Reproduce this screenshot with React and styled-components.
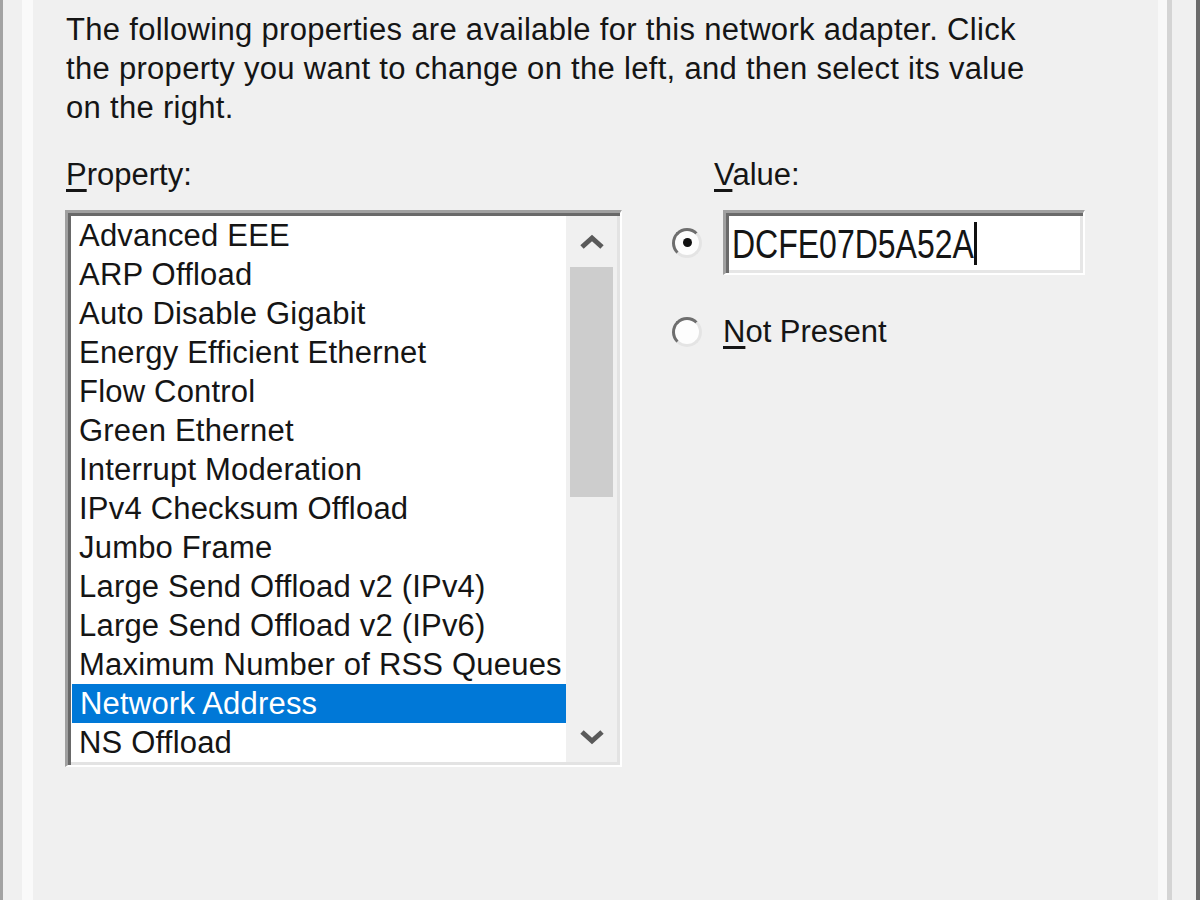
import React from 'react';
import styled, { createGlobalStyle } from 'styled-components';

const GlobalStyle = createGlobalStyle`
  html, body {
    margin: 0;
    padding: 0;
    background: #f0f0f0;
  }
  body {
    font-family: 'Liberation Sans', Arial, sans-serif;
    color: #151515;
  }
`;

const Window = styled.div`
  box-sizing: border-box;
  height: 900px;
  overflow: hidden;
  border-left: 3px solid #a3a3a3;
  border-right: 4px solid #6a6a6a;
  padding: 0 24px 0 19px;
  background: #f0f0f0;
`;

const TabPage = styled.div`
  box-sizing: border-box;
  height: 100%;
  border-left: 11px solid #fafafa;
  border-right: 5px solid #d4d4d4;
  box-shadow: inset -9px 0 0 #f8f8f8;
  padding: 10px 0 0 32px;
`;

const Intro = styled.p`
  margin: 0 0 0 1px;
  font-size: 31px;
  line-height: 39px;
  letter-spacing: 0.3px;
`;

const Columns = styled.div`
  display: grid;
  grid-template-columns: 557px 1fr;
  column-gap: 50px;
  margin-top: 28px;
`;

const Column = styled.div`
  display: flex;
  flex-direction: column;
`;

const Label = styled.div`
  font-size: 31px;
  line-height: 39px;
  margin-bottom: 16px;
  padding-left: ${(p) => p.$indent || 1}px;

  u {
    text-decoration-thickness: 3px;
    text-underline-offset: 4px;
  }
`;

const ListBox = styled.div`
  display: flex;
  width: 557px;
  box-sizing: border-box;
  border-style: solid;
  border-width: 3px 2px 2px 3px;
  border-color: #a0a0a0 #ffffff #ffffff #a0a0a0;
  box-shadow: inset 3px 3px 0 #696969, inset -3px -3px 0 #e3e3e3;
  padding: 3px;
  background: #fff;
`;

const Items = styled.ul`
  flex: 1;
  list-style: none;
  margin: 0;
  padding: 0;
  background: #fff;
`;

const Item = styled.li`
  height: 39px;
  line-height: 39px;
  font-size: 31px;
  letter-spacing: 0.2px;
  padding-left: 8px;
  margin-left: ${(p) => (p.$selected ? 1 : 0)}px;
  white-space: nowrap;
  overflow: hidden;
  background: ${(p) => (p.$selected ? '#0078d7' : 'transparent')};
  color: ${(p) => (p.$selected ? '#fff' : '#151515')};
`;

const ScrollBar = styled.div`
  width: 51px;
  display: flex;
  flex-direction: column;
  background: #f0f0f0;
`;

const ArrowButton = styled.div`
  height: 51px;
  display: flex;
  align-items: center;
  justify-content: center;
`;

const Track = styled.div`
  flex: 1;
  padding: 0 4px;
`;

const Thumb = styled.div`
  height: 230px;
  background: #cdcdcd;
`;

const ValueRow = styled.div`
  display: flex;
  align-items: center;
  gap: 21px;
`;

const Radio = styled.span`
  box-sizing: border-box;
  flex: none;
  width: 30px;
  height: 30px;
  border-radius: 50%;
  border: 3px solid;
  border-color: #6e6e6e #e4e4e4 #e4e4e4 #6e6e6e;
  background: #fdfdfd;
  display: flex;
  align-items: center;
  justify-content: center;

  &::after {
    content: '';
    width: 9px;
    height: 9px;
    border-radius: 50%;
    background: ${(p) => (p.$checked ? '#111' : 'transparent')};
  }
`;

const TextBox = styled.div`
  box-sizing: border-box;
  width: 362px;
  height: 65px;
  border-style: solid;
  border-width: 3px 2px 2px 3px;
  border-color: #a0a0a0 #ffffff #ffffff #a0a0a0;
  box-shadow: inset 3px 3px 0 #6a6a6a, inset -3px -3px 0 #e6e6e6;
  background: #fff;
  display: flex;
  align-items: center;
  padding-left: 6px;
`;

const BoxText = styled.span`
  display: inline-block;
  font-size: 40px;
  line-height: 44px;
  transform: scaleX(0.8);
  transform-origin: left center;
  color: #151515;
  margin-top: 2px;
`;

const Caret = styled.span`
  width: 3px;
  height: 43px;
  background: #111;
  margin-left: -60px;
`;

const OptionRow = styled.div`
  display: flex;
  align-items: center;
  gap: 21px;
  margin-top: 37px;
`;

const OptionText = styled.span`
  font-size: 31px;
  line-height: 39px;

  u {
    text-decoration-thickness: 3px;
    text-underline-offset: 4px;
  }
`;

const Chevron = ({ up }) => (
  <svg width="26" height="16" viewBox="0 0 26 16">
    <polyline
      points={up ? '3,13 13,4 23,13' : '3,3 13,12 23,3'}
      fill="none"
      stroke="#5a5a5a"
      strokeWidth="5"
      strokeLinejoin="miter"
    />
  </svg>
);

const properties = [
  'Advanced EEE',
  'ARP Offload',
  'Auto Disable Gigabit',
  'Energy Efficient Ethernet',
  'Flow Control',
  'Green Ethernet',
  'Interrupt Moderation',
  'IPv4 Checksum Offload',
  'Jumbo Frame',
  'Large Send Offload v2 (IPv4)',
  'Large Send Offload v2 (IPv6)',
  'Maximum Number of RSS Queues',
  'Network Address',
  'NS Offload',
];

export default function App() {
  return (
    <>
      <GlobalStyle />
      <Window>
        <TabPage>
          <Intro>
            The following properties are available for this network adapter. Click
            <br />
            the property you want to change on the left, and then select its value
            <br />
            on the right.
          </Intro>
          <Columns>
            <Column>
              <Label>
                <u>P</u>roperty:
              </Label>
              <ListBox>
                <Items>
                  {properties.map((name) => (
                    <Item key={name} $selected={name === 'Network Address'}>
                      {name}
                    </Item>
                  ))}
                </Items>
                <ScrollBar>
                  <ArrowButton>
                    <Chevron up />
                  </ArrowButton>
                  <Track>
                    <Thumb />
                  </Track>
                  <ArrowButton>
                    <Chevron />
                  </ArrowButton>
                </ScrollBar>
              </ListBox>
            </Column>
            <Column>
              <Label $indent={42}>
                <u>V</u>alue:
              </Label>
              <ValueRow>
                <Radio $checked />
                <TextBox>
                  <BoxText>DCFE07D5A52A</BoxText>
                  <Caret />
                </TextBox>
              </ValueRow>
              <OptionRow>
                <Radio />
                <OptionText>
                  <u>N</u>ot Present
                </OptionText>
              </OptionRow>
            </Column>
          </Columns>
        </TabPage>
      </Window>
    </>
  );
}
